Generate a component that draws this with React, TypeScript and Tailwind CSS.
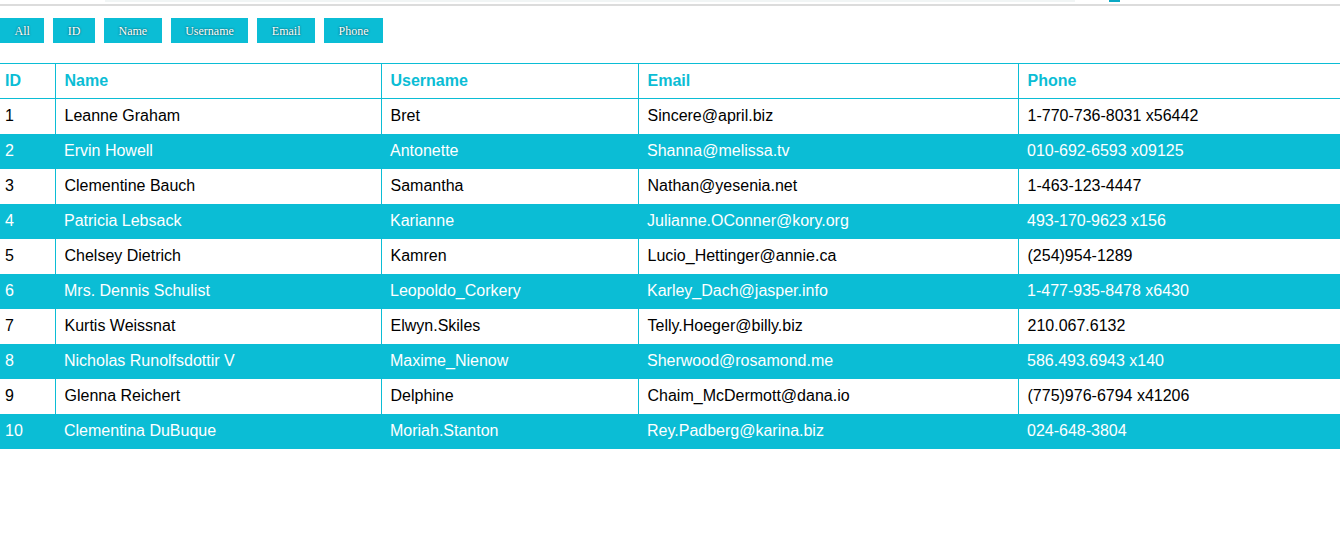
const users = [
  { id: 1, name: "Leanne Graham", username: "Bret", email: "Sincere@april.biz", phone: "1-770-736-8031 x56442" },
  { id: 2, name: "Ervin Howell", username: "Antonette", email: "Shanna@melissa.tv", phone: "010-692-6593 x09125" },
  { id: 3, name: "Clementine Bauch", username: "Samantha", email: "Nathan@yesenia.net", phone: "1-463-123-4447" },
  { id: 4, name: "Patricia Lebsack", username: "Karianne", email: "Julianne.OConner@kory.org", phone: "493-170-9623 x156" },
  { id: 5, name: "Chelsey Dietrich", username: "Kamren", email: "Lucio_Hettinger@annie.ca", phone: "(254)954-1289" },
  { id: 6, name: "Mrs. Dennis Schulist", username: "Leopoldo_Corkery", email: "Karley_Dach@jasper.info", phone: "1-477-935-8478 x6430" },
  { id: 7, name: "Kurtis Weissnat", username: "Elwyn.Skiles", email: "Telly.Hoeger@billy.biz", phone: "210.067.6132" },
  { id: 8, name: "Nicholas Runolfsdottir V", username: "Maxime_Nienow", email: "Sherwood@rosamond.me", phone: "586.493.6943 x140" },
  { id: 9, name: "Glenna Reichert", username: "Delphine", email: "Chaim_McDermott@dana.io", phone: "(775)976-6794 x41206" },
  { id: 10, name: "Clementina DuBuque", username: "Moriah.Stanton", email: "Rey.Padberg@karina.biz", phone: "024-648-3804" },
];

const filters = ["All", "ID", "Name", "Username", "Email", "Phone"];

export default function App() {
  return (
    <div className="min-h-[538px] bg-white font-['Liberation_Sans',Arial,sans-serif]">
      {/* leftover of the page above */}
      <div className="flex h-[4px]">
        <div className="w-[105px]" />
        <div className="h-[2px] w-[970px] bg-[#f1f5f5]" />
        <div className="w-[34px]" />
        <div className="h-[2px] w-[11px] bg-[#0ba9c4]" />
      </div>
      <div className="h-[2px] bg-[#dcdcdc]" />

      <div className="mt-[12px] flex gap-[9px]">
        {filters.map((f) => (
          <button
            key={f}
            className="h-[25px] bg-[#0bbdd5] px-[14.5px] font-['Liberation_Serif','Times_New_Roman',serif] text-[12px] text-white [text-shadow:0_0_2px_rgba(0,0,0,0.75)]"
          >
            {f}
          </button>
        ))}
      </div>

      <table className="mt-[20px] w-full table-fixed border-collapse text-[16px]">
        <colgroup>
          <col className="w-[55px]" />
          <col className="w-[326px]" />
          <col className="w-[257px]" />
          <col className="w-[380px]" />
          <col />
        </colgroup>
        <thead>
          <tr className="h-[35px] border-y border-[#0bbdd5] text-left font-bold text-[#0bbdd5]">
            <th className="pl-[5px]">ID</th>
            <th className="border-l border-[#0bbdd5] pl-[9px]">Name</th>
            <th className="border-l border-[#0bbdd5] pl-[9px]">Username</th>
            <th className="border-l border-[#0bbdd5] pl-[9px]">Email</th>
            <th className="border-l border-[#0bbdd5] pl-[9px]">Phone</th>
          </tr>
        </thead>
        <tbody>
          {users.map((u, i) => {
            const striped = i % 2 === 1;
            const cell = striped ? "pl-[9px]" : "border-l border-[#0bbdd5] pl-[9px]";
            return (
              <tr
                key={u.id}
                className={striped ? "h-[35px] bg-[#0bbdd5] text-white" : "h-[35px] text-black"}
              >
                <td className="pl-[5px]">{u.id}</td>
                <td className={cell}>{u.name}</td>
                <td className={cell}>{u.username}</td>
                <td className={cell}>{u.email}</td>
                <td className={cell}>{u.phone}</td>
              </tr>
            );
          })}
        </tbody>
      </table>
    </div>
  );
}
